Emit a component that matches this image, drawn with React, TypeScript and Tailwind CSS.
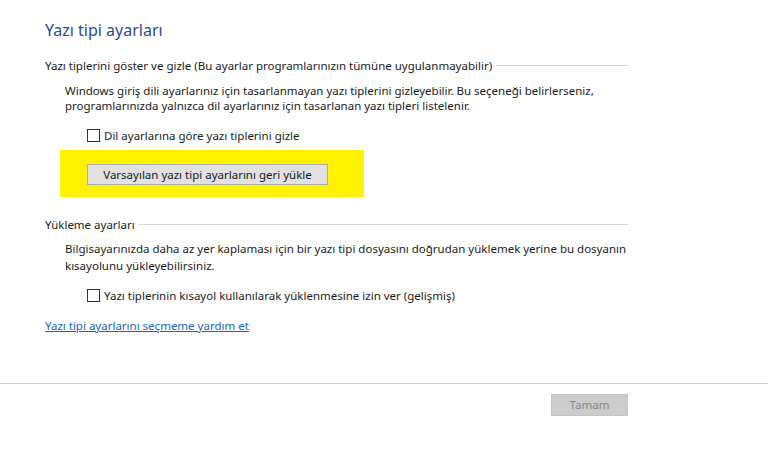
import React from 'react';

const font = { fontFamily: '"Noto Sans", "Open Sans", sans-serif' };

function Checkbox({ label }: { label: string }) {
  return (
    <label className="flex items-center gap-[4px] whitespace-nowrap text-[11.5px] text-[#1a1a1a]">
      <span className="h-[13px] w-[13px] border border-[#333333] bg-white" />
      {label}
    </label>
  );
}

function GroupHeader({ title }: { title: string }) {
  return (
    <div className="flex items-center gap-[4px] text-[11.5px] text-[#1a1a1a]">
      <span className="whitespace-nowrap">{title}</span>
      <span className="h-px flex-1 bg-[#d5d5d5]" />
    </div>
  );
}

export default function App() {
  return (
    <div className="flex h-[455px] w-[768px] flex-col bg-white" style={font}>
      <div className="w-[628px] pl-[45px]">
        <h1 className="pt-[18px] text-[16px] leading-[24px] text-[#2a4a98]">Yazı tipi ayarları</h1>

        <div className="mt-[15px]">
          <GroupHeader title="Yazı tiplerini göster ve gizle (Bu ayarlar programlarınızın tümüne uygulanmayabilir)" />
        </div>
        <p className="mt-[9px] whitespace-nowrap pl-[20px] text-[11.5px] leading-[15px] text-[#1a1a1a]">
          Windows giriş dili ayarlarınız için tasarlanmayan yazı tiplerini gizleyebilir. Bu seçeneği belirlerseniz,
          <br />
          programlarınızda yalnızca dil ayarlarınız için tasarlanan yazı tipleri listelenir.
        </p>
        <div className="mt-[14px] pl-[42px]">
          <Checkbox label="Dil ayarlarına göre yazı tiplerini gizle" />
        </div>
        <div className="ml-[15px] mt-[5px] h-[47px] w-[304px] bg-[#fff200] pl-[27px] pt-[11px]">
          <button className="h-[21px] w-[241px] border border-[#adadad] bg-[#e1e1e1] text-[11.5px] leading-[19px] text-[#1a1a1a]">
            Varsayılan yazı tipi ayarlarını geri yükle
          </button>
        </div>

        <div className="mt-[19px]">
          <GroupHeader title="Yükleme ayarları" />
        </div>
        <p className="mt-[7px] whitespace-nowrap pl-[20px] text-[11.5px] leading-[17px] text-[#1a1a1a]">
          Bilgisayarınızda daha az yer kaplaması için bir yazı tipi dosyasını doğrudan yüklemek yerine bu dosyanın
          <br />
          kısayolunu yükleyebilirsiniz.
        </p>
        <div className="mt-[13px] pl-[42px]">
          <Checkbox label="Yazı tiplerinin kısayol kullanılarak yüklenmesine izin ver (gelişmiş)" />
        </div>
        <a className="mt-[13px] block text-[11.5px] text-[#1d63b8] underline">Yazı tipi ayarlarını seçmeme yardım et</a>
      </div>

      <div className="mt-auto h-[72px] border-t border-[#cfcfcf] bg-white">
        <div className="flex w-[628px] justify-end pt-[10px]">
          <button className="h-[22px] w-[77px] border border-[#c4c4c4] bg-[#cccccc] text-[11.5px] text-[#888888]">
            Tamam
          </button>
        </div>
      </div>
    </div>
  );
}
